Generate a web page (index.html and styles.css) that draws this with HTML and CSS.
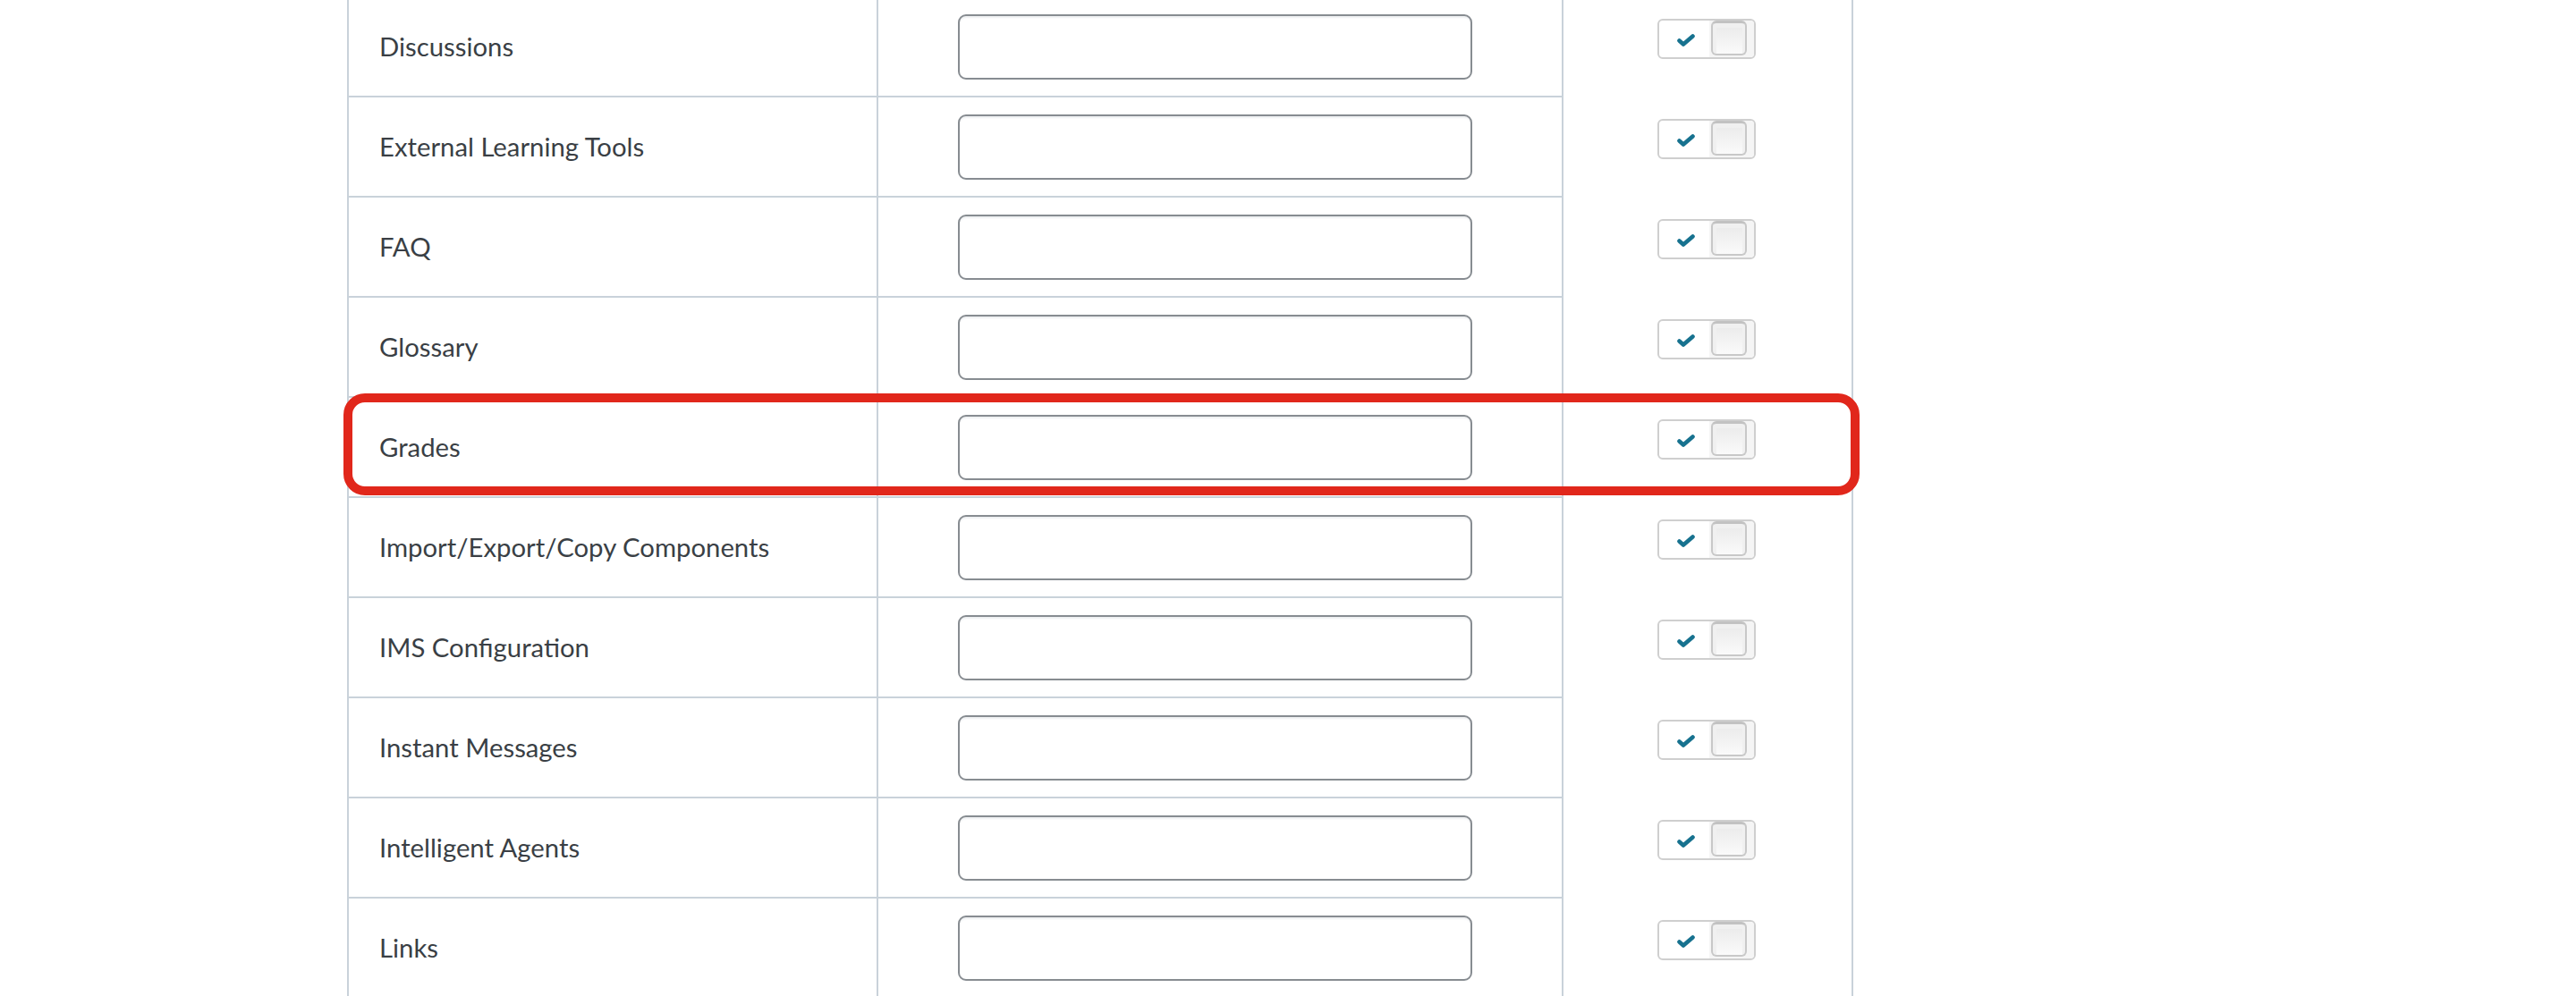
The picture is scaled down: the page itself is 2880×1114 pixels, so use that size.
FILE: index.html
```html
<!DOCTYPE html>
<html lang="en">
<head>
<meta charset="utf-8">
<title>Tools</title>
<link rel="stylesheet" href="styles.css">
</head>
<body>
<div class="tools">
  <div class="row"><div class="name">Discussions</div><div class="field"><div class="input"></div></div><div class="state"><div class="toggle"><div class="on"><svg class="check" viewBox="0 0 20 14" width="20" height="14"><path d="M2.5 7.5 L7 11.5 L17.5 2.5" fill="none" stroke="#17728f" stroke-width="4.6" stroke-linecap="round" stroke-linejoin="round"/></svg></div><div class="off"><div class="knob"><div class="knob-face"></div></div></div></div></div></div>
  <div class="row"><div class="name">External Learning Tools</div><div class="field"><div class="input"></div></div><div class="state"><div class="toggle"><div class="on"><svg class="check" viewBox="0 0 20 14" width="20" height="14"><path d="M2.5 7.5 L7 11.5 L17.5 2.5" fill="none" stroke="#17728f" stroke-width="4.6" stroke-linecap="round" stroke-linejoin="round"/></svg></div><div class="off"><div class="knob"><div class="knob-face"></div></div></div></div></div></div>
  <div class="row"><div class="name">FAQ</div><div class="field"><div class="input"></div></div><div class="state"><div class="toggle"><div class="on"><svg class="check" viewBox="0 0 20 14" width="20" height="14"><path d="M2.5 7.5 L7 11.5 L17.5 2.5" fill="none" stroke="#17728f" stroke-width="4.6" stroke-linecap="round" stroke-linejoin="round"/></svg></div><div class="off"><div class="knob"><div class="knob-face"></div></div></div></div></div></div>
  <div class="row"><div class="name">Glossary</div><div class="field"><div class="input"></div></div><div class="state"><div class="toggle"><div class="on"><svg class="check" viewBox="0 0 20 14" width="20" height="14"><path d="M2.5 7.5 L7 11.5 L17.5 2.5" fill="none" stroke="#17728f" stroke-width="4.6" stroke-linecap="round" stroke-linejoin="round"/></svg></div><div class="off"><div class="knob"><div class="knob-face"></div></div></div></div></div></div>
  <div class="row highlighted"><div class="name">Grades</div><div class="field"><div class="input"></div></div><div class="state"><div class="toggle"><div class="on"><svg class="check" viewBox="0 0 20 14" width="20" height="14"><path d="M2.5 7.5 L7 11.5 L17.5 2.5" fill="none" stroke="#17728f" stroke-width="4.6" stroke-linecap="round" stroke-linejoin="round"/></svg></div><div class="off"><div class="knob"><div class="knob-face"></div></div></div></div></div><div class="annotation"></div></div>
  <div class="row"><div class="name">Import/Export/Copy Components</div><div class="field"><div class="input"></div></div><div class="state"><div class="toggle"><div class="on"><svg class="check" viewBox="0 0 20 14" width="20" height="14"><path d="M2.5 7.5 L7 11.5 L17.5 2.5" fill="none" stroke="#17728f" stroke-width="4.6" stroke-linecap="round" stroke-linejoin="round"/></svg></div><div class="off"><div class="knob"><div class="knob-face"></div></div></div></div></div></div>
  <div class="row"><div class="name">IMS Configuration</div><div class="field"><div class="input"></div></div><div class="state"><div class="toggle"><div class="on"><svg class="check" viewBox="0 0 20 14" width="20" height="14"><path d="M2.5 7.5 L7 11.5 L17.5 2.5" fill="none" stroke="#17728f" stroke-width="4.6" stroke-linecap="round" stroke-linejoin="round"/></svg></div><div class="off"><div class="knob"><div class="knob-face"></div></div></div></div></div></div>
  <div class="row"><div class="name">Instant Messages</div><div class="field"><div class="input"></div></div><div class="state"><div class="toggle"><div class="on"><svg class="check" viewBox="0 0 20 14" width="20" height="14"><path d="M2.5 7.5 L7 11.5 L17.5 2.5" fill="none" stroke="#17728f" stroke-width="4.6" stroke-linecap="round" stroke-linejoin="round"/></svg></div><div class="off"><div class="knob"><div class="knob-face"></div></div></div></div></div></div>
  <div class="row"><div class="name">Intelligent Agents</div><div class="field"><div class="input"></div></div><div class="state"><div class="toggle"><div class="on"><svg class="check" viewBox="0 0 20 14" width="20" height="14"><path d="M2.5 7.5 L7 11.5 L17.5 2.5" fill="none" stroke="#17728f" stroke-width="4.6" stroke-linecap="round" stroke-linejoin="round"/></svg></div><div class="off"><div class="knob"><div class="knob-face"></div></div></div></div></div></div>
  <div class="row"><div class="name">Links</div><div class="field"><div class="input"></div></div><div class="state"><div class="toggle"><div class="on"><svg class="check" viewBox="0 0 20 14" width="20" height="14"><path d="M2.5 7.5 L7 11.5 L17.5 2.5" fill="none" stroke="#17728f" stroke-width="4.6" stroke-linecap="round" stroke-linejoin="round"/></svg></div><div class="off"><div class="knob"><div class="knob-face"></div></div></div></div></div></div>
</div>
</body>
</html>
```
FILE: styles.css
```css
html, body {
  margin: 0;
  padding: 0;
  background: #ffffff;
}
body {
  width: 2880px;
  height: 1114px;
  overflow: hidden;
  font-family: Lato, "Open Sans", "Liberation Sans", sans-serif;
  color: #3a3f45;
}
.tools {
  margin: -3px 0 0 388px;
  width: 1680px;
  border-left: 2px solid #c9d2da;
  border-right: 2px solid #c9d2da;
}
.row {
  position: relative;
  display: grid;
  grid-template-columns: 590px 764px 322px;
  column-gap: 2px;
  background: #c9d2da;
  border-bottom: 2px solid #c9d2da;
  height: 110px;
}
.name, .field, .state {
  background: #ffffff;
  height: 110px;
}
.name {
  padding-left: 34px;
  font-size: 29.3px;
  line-height: 110px;
  white-space: nowrap;
}
.field {
  display: flex;
  align-items: center;
  padding-left: 89px;
}
.input {
  width: 571px;
  height: 69px;
  border: 2px solid #878c91;
  border-radius: 9px;
  background: #ffffff;
  box-shadow: inset 0 3px 2px -1px #eef0f2;
}
.state {
  padding: 24px 0 0 105px;
}
.toggle {
  display: flex;
  width: 106px;
  height: 41px;
  border: 2px solid #cfcfcf;
  border-radius: 6px;
  overflow: hidden;
  background: #ffffff;
}
.on {
  width: 56px;
  display: flex;
  align-items: center;
  justify-content: center;
  padding: 2px 0 0 4px;
  box-sizing: border-box;
}
.check {
  display: block;
}
.off {
  flex: 1;
  background: #f5f5f5;
  padding-left: 2px;
}
.knob {
  width: 36px;
  height: 34px;
  border: 2px solid #c8c8c8;
  border-top: 3px solid #c2c2c2;
  border-radius: 6px;
  background: #f0f0f0;
  display: flex;
  justify-content: center;
  align-items: flex-end;
  overflow: hidden;
}
.knob-face {
  width: 29px;
  height: 31px;
  margin-bottom: -2px;
  background: linear-gradient(#ececec, #fbfbfb);
}
.annotation {
  position: absolute;
  top: -5px;
  left: -6px;
  right: -9px;
  height: 114px;
  box-sizing: border-box;
  border: 10px solid #e1271b;
  border-radius: 24px;
  pointer-events: none;
}
```
